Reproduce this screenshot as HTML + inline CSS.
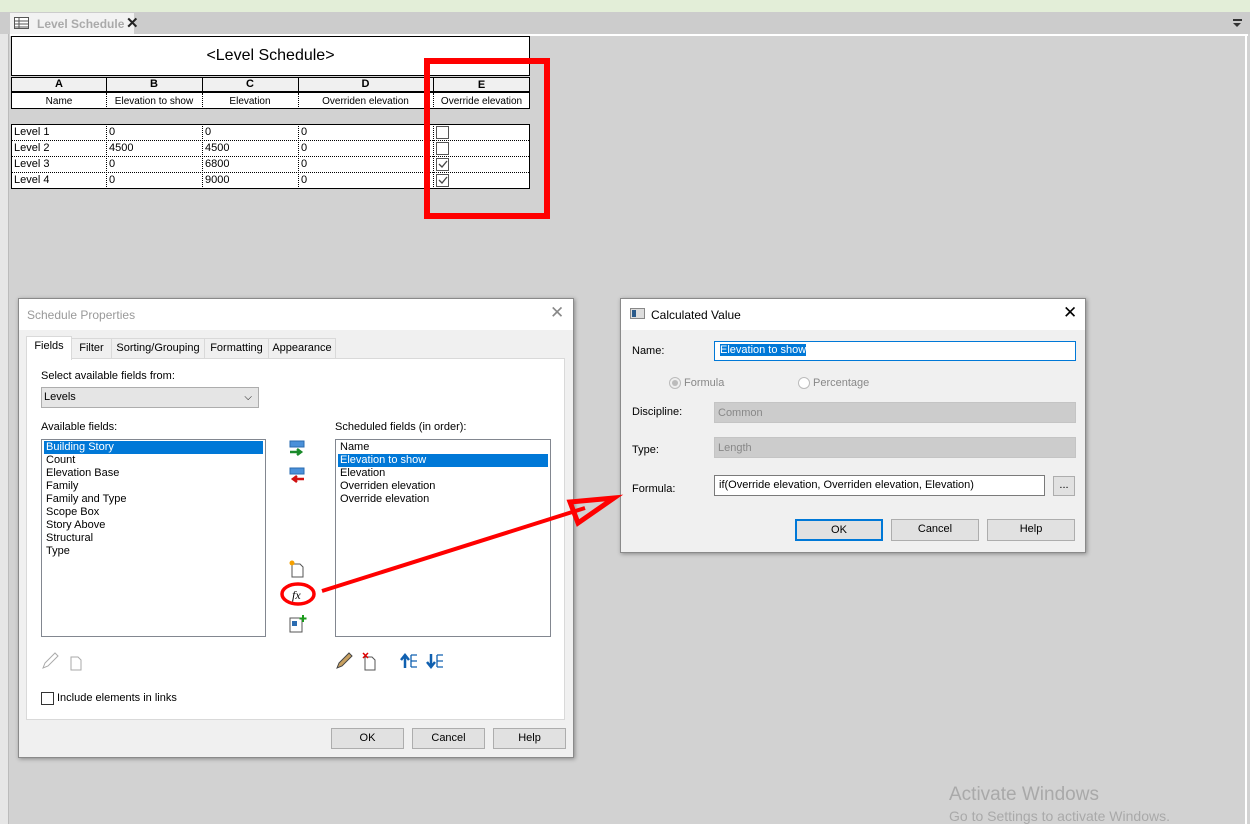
<!DOCTYPE html>
<html><head><style>
*{box-sizing:border-box;margin:0;padding:0}
body{width:1250px;height:824px;position:relative;overflow:hidden;background:#d2d2d2;font-family:"Liberation Sans",sans-serif;font-size:11px;color:#000}
.abs{position:absolute}
.cell{position:absolute;overflow:hidden;white-space:nowrap;line-height:15px}
.dlg{position:absolute;background:#f0f0f0;border:1px solid #8a8a8a;box-shadow:1px 1px 4px rgba(0,0,0,.35)}
.btn{position:absolute;background:#e1e1e1;border:1px solid #adadad;text-align:center;font-size:11px;line-height:19px}
.list{position:absolute;background:#fff;border:1px solid #828790;font-size:11px;line-height:13px}
.list div{padding-left:2px}
.sel{background:#0078d7;color:#fff}
.tab{position:absolute;top:39px;height:20px;background:#f0f0f0;border:1px solid #d9d9d9;border-bottom:none;font-size:11px;line-height:18px;text-align:center}
</style></head><body>
<div class="abs" style="left:0;top:0;width:1250px;height:12px;background:#e3eed8"></div>
<div class="abs" style="left:0;top:12px;width:1250px;height:22px;background:#cccccc"></div>
<div class="abs" style="left:0;top:34px;width:9px;height:790px;background:#e6e6e6;border-right:1px solid #bbb"></div>
<div class="abs" style="left:10px;top:13px;width:124px;height:22px;background:#f2f2f2"></div>
<svg class="abs" style="left:14px;top:17px" width="16" height="13"><rect x="0.5" y="0.5" width="14" height="11" fill="#fff" stroke="#555"/><path d="M1 4h13M1 7h13M1 10h13M5 1v11" stroke="#555"/></svg>
<div class="abs" style="left:37px;top:17px;font-size:12px;font-weight:bold;color:#aaa">Level Schedule</div>
<div class="abs" style="left:126px;top:14px;font-size:15px;font-weight:bold;color:#222">✕</div>
<div class="abs" style="left:1233px;top:19px;width:9px;height:2px;background:#333"></div>
<div class="abs" style="left:1233px;top:23px;width:0;height:0;border-left:4px solid transparent;border-right:4px solid transparent;border-top:4px solid #333"></div>
<div class="abs" style="left:10px;top:34px;width:1238px;height:2px;background:#fff"></div>
<div class="abs" style="left:1245px;top:34px;width:2px;height:790px;background:#fff"></div>

<!-- schedule -->
<div class="abs" style="left:11px;top:36px;width:519px;height:40px;background:#fff;border:1px solid #000;text-align:center;font-size:16px;line-height:38px">&lt;Level Schedule&gt;</div>
<div class="abs" style="left:11px;top:77px;width:519px;height:16px;background:#f0f0f0;border:1px solid #000;border-bottom:2px solid #000"></div>
<div class="abs" style="left:11px;top:93px;width:519px;height:16px;background:#fff;border:1px solid #000;border-top:none"></div>
<div class="abs" style="left:11px;top:124px;width:519px;height:65px;background:#fff;border:1px solid #000"></div>
<div class="abs" style="left:106px;top:77px;height:16px;border-left:1px solid #000"></div>
<div class="abs" style="left:202px;top:77px;height:16px;border-left:1px solid #000"></div>
<div class="abs" style="left:298px;top:77px;height:16px;border-left:1px solid #000"></div>
<div class="abs" style="left:433px;top:77px;height:16px;border-left:1px solid #000"></div>
<div class="abs" style="left:106px;top:93px;height:16px;border-left:1px dotted #000"></div>
<div class="abs" style="left:202px;top:93px;height:16px;border-left:1px dotted #000"></div>
<div class="abs" style="left:298px;top:93px;height:16px;border-left:1px dotted #000"></div>
<div class="abs" style="left:433px;top:93px;height:16px;border-left:1px dotted #000"></div>
<div class="abs" style="left:106px;top:124px;height:65px;border-left:1px dotted #000"></div>
<div class="abs" style="left:202px;top:124px;height:65px;border-left:1px dotted #000"></div>
<div class="abs" style="left:298px;top:124px;height:65px;border-left:1px dotted #000"></div>
<div class="abs" style="left:433px;top:124px;height:65px;border-left:1px dotted #000"></div>
<div class="abs" style="left:12px;top:140px;width:517px;border-top:1px dotted #000"></div>
<div class="abs" style="left:12px;top:156px;width:517px;border-top:1px dotted #000"></div>
<div class="abs" style="left:12px;top:172px;width:517px;border-top:1px dotted #000"></div>
<div class="cell" style="left:11px;top:77px;width:96px;text-align:center;font-weight:bold">A</div>
<div class="cell" style="left:106px;top:77px;width:96px;text-align:center;font-weight:bold">B</div>
<div class="cell" style="left:202px;top:77px;width:96px;text-align:center;font-weight:bold">C</div>
<div class="cell" style="left:298px;top:77px;width:135px;text-align:center;font-weight:bold">D</div>
<div class="cell" style="left:433px;top:78px;width:97px;text-align:center;font-weight:bold">E</div>
<div class="cell" style="left:11px;top:94px;width:96px;text-align:center;font-size:10px">Name</div>
<div class="cell" style="left:106px;top:94px;width:96px;text-align:center;font-size:10px">Elevation to show</div>
<div class="cell" style="left:202px;top:94px;width:96px;text-align:center;font-size:10px">Elevation</div>
<div class="cell" style="left:298px;top:94px;width:135px;text-align:center;font-size:10px">Overriden elevation</div>
<div class="cell" style="left:433px;top:94px;width:97px;text-align:center;font-size:10px">Override elevation</div>
<div class="cell" style="left:14px;top:125px">Level 1</div><div class="cell" style="left:109px;top:125px">0</div><div class="cell" style="left:205px;top:125px">0</div><div class="cell" style="left:301px;top:125px">0</div>
<div class="cell" style="left:14px;top:141px">Level 2</div><div class="cell" style="left:109px;top:141px">4500</div><div class="cell" style="left:205px;top:141px">4500</div><div class="cell" style="left:301px;top:141px">0</div>
<div class="cell" style="left:14px;top:157px">Level 3</div><div class="cell" style="left:109px;top:157px">0</div><div class="cell" style="left:205px;top:157px">6800</div><div class="cell" style="left:301px;top:157px">0</div>
<div class="cell" style="left:14px;top:173px">Level 4</div><div class="cell" style="left:109px;top:173px">0</div><div class="cell" style="left:205px;top:173px">9000</div><div class="cell" style="left:301px;top:173px">0</div>
<svg class="abs" style="left:436px;top:126px" width="14" height="62"><rect x="0.5" y="0.5" width="12" height="12" fill="#fff" stroke="#555"/><rect x="0.5" y="16.5" width="12" height="12" fill="#fff" stroke="#555"/><rect x="0.5" y="32.5" width="12" height="12" fill="#fff" stroke="#555"/><rect x="0.5" y="48.5" width="12" height="12" fill="#fff" stroke="#555"/><path d="M3 38l3 3 5-6M3 54l3 3 5-6" stroke="#444" fill="none" stroke-width="1.3"/></svg>
<div class="abs" style="left:424px;top:58px;width:126px;height:161px;border:6px solid #f00"></div>

<!-- Schedule Properties -->
<div class="dlg" style="left:18px;top:298px;width:556px;height:460px">
<div class="abs" style="left:0;top:0;width:554px;height:31px;background:#fff"></div>
<div class="abs" style="left:8px;top:9px;font-size:12px;color:#999">Schedule Properties</div>
<div class="abs" style="left:531px;top:4px;font-size:17px;color:#888">✕</div>
<div class="abs" style="left:7px;top:59px;width:539px;height:362px;background:#fff;border:1px solid #d9d9d9"></div>
<div class="tab" style="left:52px;width:41px">Filter</div>
<div class="tab" style="left:92px;width:94px">Sorting/Grouping</div>
<div class="tab" style="left:185px;width:65px">Formatting</div>
<div class="tab" style="left:249px;width:68px">Appearance</div>
<div class="abs" style="left:7px;top:37px;width:46px;height:24px;background:#fff;border:1px solid #d9d9d9;border-bottom:none;font-size:11px;line-height:18px;text-align:center">Fields</div>
<div class="abs" style="left:22px;top:71px">Select available fields from:</div>
<div class="abs" style="left:22px;top:88px;width:218px;height:21px;background:#e5e5e5;border:1px solid #adadad;padding-left:2px;line-height:19px">Levels<span style="position:absolute;right:6px;top:0;font-size:10px">⌵</span></div>
<div class="abs" style="left:22px;top:122px">Available fields:</div>
<div class="abs" style="left:316px;top:122px">Scheduled fields (in order):</div>
<div class="list" style="left:22px;top:140px;width:225px;height:198px;padding:1px 2px"><div class="sel">Building Story</div><div>Count</div><div>Elevation Base</div><div>Family</div><div>Family and Type</div><div>Scope Box</div><div>Story Above</div><div>Structural</div><div>Type</div></div>
<div class="list" style="left:316px;top:140px;width:216px;height:198px;padding:1px 2px"><div>Name</div><div class="sel">Elevation to show</div><div>Elevation</div><div>Overriden elevation</div><div>Override elevation</div></div>
<svg class="abs" style="left:269px;top:141px" width="20" height="20"><rect x="2" y="1" width="14" height="6" fill="#4a90d9" stroke="#2a6bb0"/><path d="M2 12h10M9 9l4 3-4 3" stroke="#1a8a2a" stroke-width="2.5" fill="none"/></svg>
<svg class="abs" style="left:269px;top:168px" width="20" height="20"><rect x="2" y="1" width="14" height="6" fill="#4a90d9" stroke="#2a6bb0"/><path d="M6 12h10M9 9l-4 3 4 3" stroke="#d01010" stroke-width="2.5" fill="none"/></svg>
<svg class="abs" style="left:270px;top:261px" width="16" height="18"><path d="M3 4h8l3 3v10H3z" fill="#fff" stroke="#555"/><circle cx="3" cy="3" r="2.5" fill="#f5a000"/></svg>
<div class="abs" style="left:273px;top:289px;font-family:'Liberation Serif',serif;font-style:italic;font-size:12px">fx</div>
<svg class="abs" style="left:270px;top:315px" width="18" height="20"><rect x="1" y="4" width="12" height="14" fill="#fff" stroke="#555"/><rect x="3" y="7" width="5" height="5" fill="#2a6bb0"/><path d="M14 1v7M10.5 4.5h7" stroke="#1a9a1a" stroke-width="2"/></svg>
<svg class="abs" style="left:22px;top:352px" width="50" height="20"><path d="M2 17l2-5 10-10 3 3-10 10z" fill="none" stroke="#aaa"/><path d="M30 6h7l3 3v10H30z" fill="#fff" stroke="#aaa"/></svg>
<svg class="abs" style="left:316px;top:352px" width="120" height="20"><path d="M2 17l2-5 10-10 3 3-10 10z" fill="#c8a060" stroke="#444"/><path d="M30 6h7l3 3v10H30z" fill="#fff" stroke="#555"/><path d="M28 2l5 5M33 2l-5 5" stroke="#d00" stroke-width="1.5"/><path d="M70 17V5M66 9l4-5 4 5" stroke="#1060b0" stroke-width="2.5" fill="none"/><path d="M76 4h6M76 10h6M76 16h6M76 4v12" stroke="#1060b0" stroke-width="1.3"/><path d="M96 3v12M92 11l4 5 4-5" stroke="#1060b0" stroke-width="2.5" fill="none"/><path d="M102 4h6M102 10h6M102 16h6M102 4v12" stroke="#1060b0" stroke-width="1.3"/></svg>
<div class="abs" style="left:22px;top:393px;width:13px;height:13px;background:#fff;border:1px solid #333"></div>
<div class="abs" style="left:38px;top:393px">Include elements in links</div>
<div class="btn" style="left:312px;top:429px;width:73px;height:21px">OK</div>
<div class="btn" style="left:393px;top:429px;width:73px;height:21px">Cancel</div>
<div class="btn" style="left:474px;top:429px;width:73px;height:21px">Help</div>
</div>

<!-- Calculated Value -->
<div class="dlg" style="left:620px;top:298px;width:466px;height:255px">
<div class="abs" style="left:0;top:0;width:464px;height:31px;background:#fff"></div>
<svg class="abs" style="left:9px;top:9px" width="16" height="12"><rect x="0.5" y="0.5" width="14" height="10" fill="#ddd" stroke="#888"/><rect x="2" y="2" width="4" height="7" fill="#2a5a8a"/></svg>
<div class="abs" style="left:30px;top:9px;font-size:12px">Calculated Value</div>
<div class="abs" style="left:442px;top:4px;font-size:17px">✕</div>
<div class="abs" style="left:11px;top:46px">Name:</div>
<div class="abs" style="left:93px;top:42px;width:362px;height:20px;background:#fff;border:1px solid #0078d7;padding:2px 0 0 5px"><span style="background:#0078d7;color:#fff">Elevation to show</span></div>
<div class="abs" style="left:48px;top:78px;width:12px;height:12px;border-radius:50%;border:1px solid #bbb;background:#eee"><div style="margin:2px;width:6px;height:6px;border-radius:50%;background:#bbb"></div></div>
<div class="abs" style="left:63px;top:78px;color:#888">Formula</div>
<div class="abs" style="left:177px;top:78px;width:12px;height:12px;border-radius:50%;border:1px solid #bbb;background:#fff"></div>
<div class="abs" style="left:192px;top:78px;color:#888">Percentage</div>
<div class="abs" style="left:11px;top:107px">Discipline:</div>
<div class="abs" style="left:93px;top:103px;width:362px;height:21px;background:#ccc;border:1px solid #c4c4c4;padding:4px 0 0 3px;color:#888">Common</div>
<div class="abs" style="left:11px;top:145px">Type:</div>
<div class="abs" style="left:93px;top:138px;width:362px;height:21px;background:#ccc;border:1px solid #c4c4c4;padding:4px 0 0 3px;color:#888">Length</div>
<div class="abs" style="left:11px;top:184px">Formula:</div>
<div class="abs" style="left:93px;top:176px;width:331px;height:21px;background:#fff;border:1px solid #7a7a7a;padding:3px 0 0 4px">if(Override elevation, Overriden elevation, Elevation)</div>
<div class="btn" style="left:432px;top:177px;width:22px;height:20px;line-height:16px">...</div>
<div class="btn" style="left:174px;top:220px;width:88px;height:22px;border:2px solid #0078d7;line-height:18px">OK</div>
<div class="btn" style="left:270px;top:220px;width:88px;height:22px">Cancel</div>
<div class="btn" style="left:366px;top:220px;width:88px;height:22px">Help</div>
</div>

<!-- annotations -->
<svg class="abs" style="left:0;top:0" width="1250" height="824">
<ellipse cx="298" cy="594" rx="16" ry="10" fill="none" stroke="#f00" stroke-width="3.5"/>
<path d="M322 591L585 508" stroke="#f00" stroke-width="4"/>
<path d="M570 502L614 498L578 523Z" fill="none" stroke="#f00" stroke-width="5" stroke-linejoin="miter"/>
</svg>
<div class="abs" style="left:949px;top:784px;font-size:19px;color:#a9a9a9">Activate Windows</div>
<div class="abs" style="left:949px;top:808px;font-size:14px;color:#a9a9a9">Go to Settings to activate Windows.</div>
</body></html>
